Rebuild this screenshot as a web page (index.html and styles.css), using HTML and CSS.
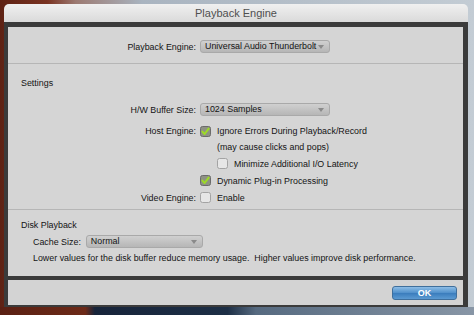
FILE: index.html
```html
<!DOCTYPE html>
<html>
<head>
<meta charset="utf-8">
<link rel="stylesheet" href="styles.css">
</head>
<body>
<div class="window">
  <div class="titlebar">Playback Engine</div>
  <div class="frame">
    <div class="panel">
      <section class="sec sec-engine">
        <div class="grid">
          <span class="lbl">Playback Engine:</span>
          <div class="popup w130"><span>Universal Audio Thunderbolt</span><svg class="arrow" width="6" height="4" viewBox="0 0 6 4"><path d="M0 0H6L3 4Z" fill="#8a8a8a"/></svg></div>
        </div>
      </section>
      <section class="sec sec-settings">
        <div class="heading">Settings</div>
        <div class="grid rows">
          <span class="lbl">H/W Buffer Size:</span>
          <div class="popup w130"><span>1024 Samples</span><svg class="arrow" width="6" height="4" viewBox="0 0 6 4"><path d="M0 0H6L3 4Z" fill="#8a8a8a"/></svg></div>
          <span class="lbl host">Host Engine:</span>
          <div class="check host"><svg class="box" width="11" height="11" viewBox="0 0 11 11"><rect x="0.5" y="0.5" width="10" height="10" rx="2" fill="#8e9283" stroke="#6b6b6b"/><path d="M2.4 5.6L4.6 8L8.7 2.6" fill="none" stroke="#9ddc24" stroke-width="2" stroke-linecap="round" stroke-linejoin="round"/></svg><span>Ignore Errors During Playback/Record</span></div>
          <span></span>
          <div class="note">(may cause clicks and pops)</div>
          <span></span>
          <div class="check indent"><svg class="box" width="11" height="11" viewBox="0 0 11 11"><rect x="0.5" y="0.5" width="10" height="10" rx="2" fill="#e6e6e6" stroke="#a3a3a3"/></svg><span>Minimize Additional I/O Latency</span></div>
          <span></span>
          <div class="check"><svg class="box" width="11" height="11" viewBox="0 0 11 11"><rect x="0.5" y="0.5" width="10" height="10" rx="2" fill="#8e9283" stroke="#6b6b6b"/><path d="M2.4 5.6L4.6 8L8.7 2.6" fill="none" stroke="#9ddc24" stroke-width="2" stroke-linecap="round" stroke-linejoin="round"/></svg><span>Dynamic Plug-in Processing</span></div>
          <span class="lbl">Video Engine:</span>
          <div class="check"><svg class="box" width="11" height="11" viewBox="0 0 11 11"><rect x="0.5" y="0.5" width="10" height="10" rx="2" fill="#e6e6e6" stroke="#a3a3a3"/></svg><span>Enable</span></div>
        </div>
      </section>
      <section class="sec sec-disk">
        <div class="heading">Disk Playback</div>
        <div class="cache-row">
          <span class="lbl-left">Cache Size:</span>
          <div class="popup w117"><span>Normal</span><svg class="arrow" width="6" height="4" viewBox="0 0 6 4"><path d="M0 0H6L3 4Z" fill="#8a8a8a"/></svg></div>
        </div>
        <div class="hint">Lower values for the disk buffer reduce memory usage.&nbsp; Higher values improve disk performance.</div>
      </section>
    </div>
    <div class="footer">
      <button class="ok">OK</button>
    </div>
  </div>
</div>
</body>
</html>
```

FILE: styles.css
```css
html, body {
  margin: 0;
  padding: 0;
}
body {
  width: 474px;
  height: 315px;
  overflow: hidden;
  font-family: "Liberation Sans", Arial, sans-serif;
  font-size: 8.9px;
  color: #141414;
  background:
    linear-gradient(90deg, #5a2013 0, #6d2a18 18%, #17243a 20%, #1d2f46 48%, #566a80 54%, #8896a6 100%) left bottom / 100% 8px no-repeat,
    linear-gradient(90deg, #5e2214 0, #7a3322 10%, #9c7a72 16%, #a9b4c0 30%, #c3ccd4 100%);
}
.window {
  margin: 4px 6px 0 4px;
  width: 464px;
  height: 303px;
  display: flex;
  flex-direction: column;
}
.titlebar {
  height: 18px;
  line-height: 19px;
  text-align: center;
  font-size: 11px;
  color: #4f4f4f;
  background: linear-gradient(#f0f0f0, #dadada);
  border-radius: 5px 5px 0 0;
}
.frame {
  flex: 1;
  background: #3b3b3b;
  padding: 5px 5px 2px 4px;
  display: flex;
  flex-direction: column;
  gap: 4px;
}
.panel {
  height: 249px;
  background: #d5d5d5;
  display: flex;
  flex-direction: column;
}
.sec {
  border-bottom: 1px solid #b6b6b6;
}
.sec-engine {
  height: 37px;
  padding-top: 13px;
  box-sizing: border-box;
}
.sec-settings {
  height: 146px;
  box-sizing: border-box;
  padding-top: 13px;
}
.sec-disk {
  border-bottom: none;
  padding-top: 9px;
  flex: 1;
}
.heading {
  height: 12px;
  line-height: 12px;
  padding-left: 13px;
}
.sec-settings .heading {
  margin-bottom: 14px;
}
.grid {
  display: grid;
  grid-template-columns: 188px 1fr;
  column-gap: 4px;
  align-items: center;
}
.grid.rows {
  grid-template-rows: 13px 22px 17px 17px 17px 17px;
}
.grid.rows > .host {
  align-self: end;
  margin-bottom: 1px;
}
.lbl {
  text-align: right;
  line-height: 12px;
}
.popup {
  height: 13px;
  box-sizing: border-box;
  border: 1px solid #a9a9a9;
  border-radius: 3px;
  background: linear-gradient(#d0d0d0, #b6b6b6);
  display: flex;
  align-items: center;
  justify-content: space-between;
  padding: 0 5px 0 4px;
  line-height: 11px;
  color: #141414;
}
.w130 { width: 130px; }
.w117 { width: 117px; }
.arrow {
  display: block;
  flex: none;
}
.check {
  display: flex;
  align-items: center;
  gap: 6px;
  line-height: 12px;
}
.check .box {
  display: block;
  flex: none;
}
.check.indent {
  padding-left: 17px;
}
.note {
  padding-left: 17px;
  line-height: 12px;
}
.cache-row {
  display: flex;
  align-items: center;
  gap: 5px;
  padding-left: 25px;
  margin-top: 4px;
  height: 13px;
}
.lbl-left {
  line-height: 12px;
}
.hint {
  padding-left: 25px;
  margin-top: 4px;
  line-height: 12px;
}
.footer {
  height: 25px;
  background: #d3d3d3;
  display: flex;
  justify-content: flex-end;
  align-items: center;
  padding-right: 6px;
}
.ok {
  width: 65px;
  height: 14px;
  margin-top: 1px;
  padding: 0;
  border: 1px solid #3f6f9c;
  border-radius: 3px;
  background: linear-gradient(#8dbde6, #4f8fca 50%, #3a7cbc 51%, #5b9ad2);
  color: #ffffff;
  font-family: "Liberation Sans", Arial, sans-serif;
  font-weight: bold;
  font-size: 9px;
  line-height: 12px;
}
```
